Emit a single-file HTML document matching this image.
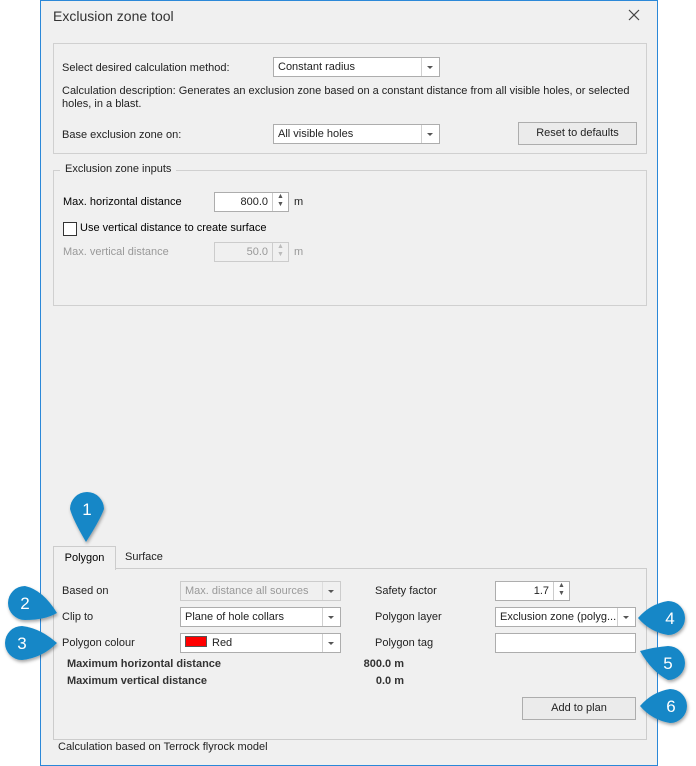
<!DOCTYPE html>
<html><head><style>
body{margin:0;width:696px;height:766px;background:#fff;position:relative;overflow:hidden;font-family:"Liberation Sans",sans-serif;font-size:11px;color:#222}
.a{position:absolute}
.win{left:40px;top:0;width:616px;height:764px;background:#f0f0f0;border:1px solid #2b88d8}
.grp{border:1px solid #d0d0d0;}
.box{background:#fff;border:1px solid #adadad;box-sizing:border-box;height:20px;padding:2px 4px;line-height:14px}
.dd{position:absolute;right:0;top:0;width:17px;height:18px;border-left:1px solid #d0d0d0}
.dd:after{content:"";position:absolute;left:5px;top:8px;border-left:3px solid transparent;border-right:3px solid transparent;border-top:3px solid #555}
.dis{background:#f0f0f0;border-color:#ccc;color:#999}
.btn{background:#ebebeb;border:1px solid #adadad;box-sizing:border-box;text-align:center;line-height:20px}
.spin{position:absolute;right:0;top:0;width:15px;height:18px;border-left:1px solid #ccc;font-size:7px;line-height:8px;text-align:center;color:#555}
b{font-weight:bold}
</style></head><body>
<div class="a win"></div>
<div class="a" style="left:53px;top:8px;font-size:14px;color:#333">Exclusion zone tool</div>
<svg class="a" style="left:628px;top:9px" width="12" height="12"><path d="M1,1L11,11M11,1L1,11" stroke="#444" stroke-width="1.2"/></svg>

<div class="a grp" style="left:53px;top:43px;width:592px;height:109px"></div>
<div class="a" style="left:62px;top:62px">Select desired calculation method:</div>
<div class="a box" style="left:273px;top:57px;width:167px">Constant radius<div class="dd"></div></div>
<div class="a" style="left:62px;top:85px;width:570px;line-height:13px">Calculation description: Generates an exclusion zone based on a constant distance from all visible holes, or selected holes, in a blast.</div>
<div class="a" style="left:62px;top:129px">Base exclusion zone on:</div>
<div class="a box" style="left:273px;top:124px;width:167px">All visible holes<div class="dd"></div></div>
<div class="a btn" style="left:518px;top:122px;width:119px;height:23px">Reset to defaults</div>

<div class="a grp" style="left:53px;top:170px;width:592px;height:134px"></div>
<div class="a" style="left:60px;top:163px;background:#f0f0f0;padding:0 5px">Exclusion zone inputs</div>
<div class="a" style="left:63px;top:196px;color:#000">Max. horizontal distance</div>
<div class="a box" style="left:214px;top:192px;width:75px;text-align:right;padding-right:20px">800.0<div class="spin">▲<br>▼</div></div>
<div class="a" style="left:294px;top:196px">m</div>
<div class="a" style="left:63px;top:222px;width:12px;height:12px;border:1px solid #333;background:#fff"></div>
<div class="a" style="left:80px;top:222px;color:#000">Use vertical distance to create surface</div>
<div class="a" style="left:63px;top:246px;color:#999">Max. vertical distance</div>
<div class="a box dis" style="left:214px;top:242px;width:75px;text-align:right;padding-right:20px">50.0<div class="spin" style="color:#bbb">▲<br>▼</div></div>
<div class="a" style="left:294px;top:246px;color:#999">m</div>

<div class="a grp" style="left:53px;top:568px;width:592px;height:170px;border-color:#ccc"></div>
<div class="a" style="left:53px;top:546px;width:61px;height:23px;border:1px solid #ccc;border-bottom:none;background:#f0f0f0;text-align:center;line-height:22px;color:#000">Polygon</div>
<div class="a" style="left:125px;top:551px">Surface</div>

<div class="a" style="left:62px;top:585px">Based on</div>
<div class="a box dis" style="left:180px;top:581px;width:161px">Max. distance all sources<div class="dd" style="border-color:#ddd"></div></div>
<div class="a" style="left:62px;top:611px">Clip to</div>
<div class="a box" style="left:180px;top:607px;width:161px">Plane of hole collars<div class="dd"></div></div>
<div class="a" style="left:62px;top:637px">Polygon colour</div>
<div class="a box" style="left:180px;top:633px;width:161px"><span style="display:inline-block;width:20px;height:9px;background:#f00;border:1px solid #555;vertical-align:-1px;margin-right:5px"></span>Red<div class="dd"></div></div>

<div class="a" style="left:375px;top:585px">Safety factor</div>
<div class="a box" style="left:495px;top:581px;width:75px;text-align:right;padding-right:20px">1.7<div class="spin">▲<br>▼</div></div>
<div class="a" style="left:375px;top:611px">Polygon layer</div>
<div class="a box" style="left:495px;top:607px;width:141px">Exclusion zone (polyg...<div class="dd"></div></div>
<div class="a" style="left:375px;top:637px">Polygon tag</div>
<div class="a box" style="left:495px;top:633px;width:141px"></div>

<div class="a" style="left:67px;top:656px;line-height:17px;color:#333"><b>Maximum horizontal distance</b><br><b>Maximum vertical distance</b></div>
<div class="a" style="left:356px;top:656px;line-height:17px;color:#333;text-align:right;width:48px"><b>800.0 m</b><br><b>0.0 m</b></div>
<div class="a btn" style="left:522px;top:697px;width:114px;height:23px">Add to plan</div>

<div class="a" style="left:58px;top:741px">Calculation based on Terrock flyrock model</div>

<svg class="a" style="left:0;top:0" width="696" height="766">
<defs><filter id="s"><feDropShadow dx="1" dy="2" stdDeviation="1.5" flood-opacity="0.35"/></filter></defs>
<g fill="#1587c7" filter="url(#s)">
<path d="M70,509 A17,17 0 1 1 104,509 Q100,520 86,542 Q73,520 70,509Z"/>
<path d="M25,586 A17,17 0 1 0 25,620 Q45,620 57,613 Q43,590 25,586Z"/>
<path d="M22,626 A17,17 0 1 0 22,660 Q42,658 57,643 Q40,628 22,626Z"/>
<path d="M668,601 A17,17 0 1 1 668,635 Q650,632 638,618 Q650,604 668,601Z"/>
<path d="M668,646 A17,17 0 1 1 668,680 Q652,672 640,651 Q655,647 668,646Z"/>
<path d="M670,689 A17,17 0 1 1 670,723 Q652,720 640,706 Q652,692 670,689Z"/>
</g>
<g fill="#fff" font-family="Liberation Sans" font-size="17" text-anchor="middle">
<text x="87" y="515">1</text><text x="25" y="609">2</text><text x="22" y="649">3</text>
<text x="670" y="624">4</text><text x="668" y="669">5</text><text x="671" y="712">6</text>
</g>
</svg>
</body></html>
